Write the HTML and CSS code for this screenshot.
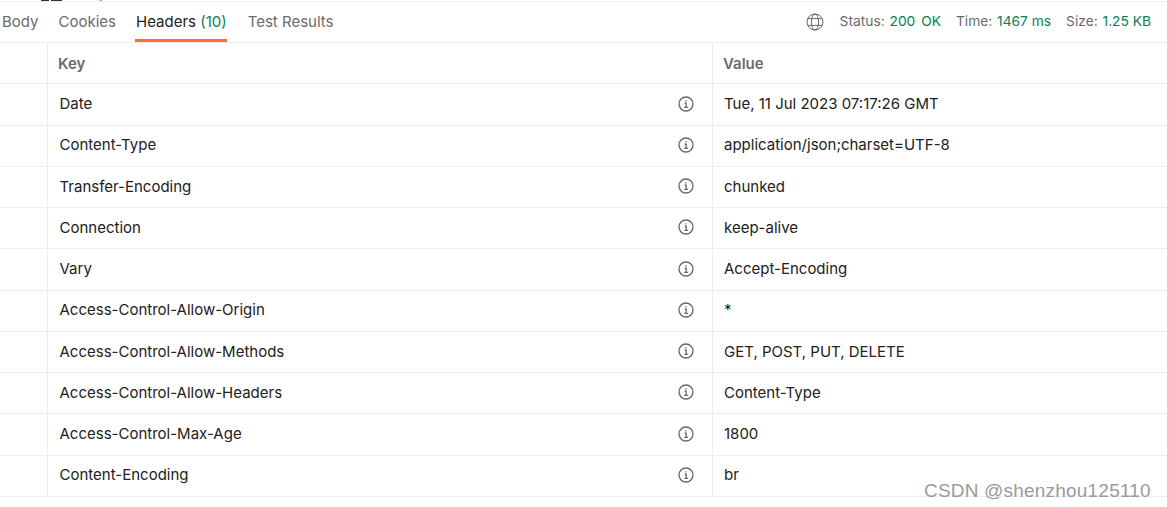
FILE: index.html
```html
<!DOCTYPE html>
<html lang="en">
<head>
<meta charset="utf-8">
<title>Response headers</title>
<link rel="stylesheet" href="styles.css">
</head>
<body>
<div class="topstrip"><i class="bit bit-a"></i><i class="bit bit-b"></i><i class="bit bit-c"></i></div>
<nav class="tabs">
  <div class="tablist">
    <span class="tab tab-body">Body</span>
    <span class="tab">Cookies</span>
    <span class="tab active">Headers <span class="count">(10)</span></span>
    <span class="tab">Test Results</span>
  </div>
  <div class="stats">
    <svg class="globe" viewBox="0 0 18 18" width="18" height="18" fill="none" stroke="#6b6b6b" stroke-width="1"><circle cx="9" cy="9" r="8"/><ellipse cx="9" cy="9" rx="3.6" ry="8"/><path d="M2 5.6h14M2 12.4h14"/></svg>
    <span class="stat">Status: <b class="status-value">200 OK</b></span>
    <span class="stat">Time: <b>1467 ms</b></span>
    <span class="stat">Size: <b>1.25 KB</b></span>
  </div>
</nav>
<div class="table">
  <div class="row head"><div class="gutter"></div><div class="key">Key</div><div class="val">Value</div></div>
  <div class="row"><div class="gutter"></div><div class="key"><span>Date</span><svg class="info" viewBox="0 0 16 16" width="16" height="16"><circle cx="8" cy="8" r="7"/><path d="M6.5 7.2h1.7v4M6.3 11.3h3.6M8 4.2v1.4"/></svg></div><div class="val">Tue, 11 Jul 2023 07:17:26 GMT</div></div>
  <div class="row"><div class="gutter"></div><div class="key"><span>Content-Type</span><svg class="info" viewBox="0 0 16 16" width="16" height="16"><circle cx="8" cy="8" r="7"/><path d="M6.5 7.2h1.7v4M6.3 11.3h3.6M8 4.2v1.4"/></svg></div><div class="val">application/json;charset=UTF-8</div></div>
  <div class="row"><div class="gutter"></div><div class="key"><span>Transfer-Encoding</span><svg class="info" viewBox="0 0 16 16" width="16" height="16"><circle cx="8" cy="8" r="7"/><path d="M6.5 7.2h1.7v4M6.3 11.3h3.6M8 4.2v1.4"/></svg></div><div class="val">chunked</div></div>
  <div class="row"><div class="gutter"></div><div class="key"><span>Connection</span><svg class="info" viewBox="0 0 16 16" width="16" height="16"><circle cx="8" cy="8" r="7"/><path d="M6.5 7.2h1.7v4M6.3 11.3h3.6M8 4.2v1.4"/></svg></div><div class="val">keep-alive</div></div>
  <div class="row"><div class="gutter"></div><div class="key"><span>Vary</span><svg class="info" viewBox="0 0 16 16" width="16" height="16"><circle cx="8" cy="8" r="7"/><path d="M6.5 7.2h1.7v4M6.3 11.3h3.6M8 4.2v1.4"/></svg></div><div class="val">Accept-Encoding</div></div>
  <div class="row"><div class="gutter"></div><div class="key"><span>Access-Control-Allow-Origin</span><svg class="info" viewBox="0 0 16 16" width="16" height="16"><circle cx="8" cy="8" r="7"/><path d="M6.5 7.2h1.7v4M6.3 11.3h3.6M8 4.2v1.4"/></svg></div><div class="val">*</div></div>
  <div class="row"><div class="gutter"></div><div class="key"><span>Access-Control-Allow-Methods</span><svg class="info" viewBox="0 0 16 16" width="16" height="16"><circle cx="8" cy="8" r="7"/><path d="M6.5 7.2h1.7v4M6.3 11.3h3.6M8 4.2v1.4"/></svg></div><div class="val">GET, POST, PUT, DELETE</div></div>
  <div class="row"><div class="gutter"></div><div class="key"><span>Access-Control-Allow-Headers</span><svg class="info" viewBox="0 0 16 16" width="16" height="16"><circle cx="8" cy="8" r="7"/><path d="M6.5 7.2h1.7v4M6.3 11.3h3.6M8 4.2v1.4"/></svg></div><div class="val">Content-Type</div></div>
  <div class="row"><div class="gutter"></div><div class="key"><span>Access-Control-Max-Age</span><svg class="info" viewBox="0 0 16 16" width="16" height="16"><circle cx="8" cy="8" r="7"/><path d="M6.5 7.2h1.7v4M6.3 11.3h3.6M8 4.2v1.4"/></svg></div><div class="val">1800</div></div>
  <div class="row"><div class="gutter"></div><div class="key"><span>Content-Encoding</span><svg class="info" viewBox="0 0 16 16" width="16" height="16"><circle cx="8" cy="8" r="7"/><path d="M6.5 7.2h1.7v4M6.3 11.3h3.6M8 4.2v1.4"/></svg></div><div class="val">br</div></div>
</div>
<div class="watermark">CSDN @shenzhou125110</div>
</body>
</html>
```
FILE: styles.css
```css
* { box-sizing: border-box; }
html, body { margin: 0; padding: 0; background: #fff; overflow: hidden; }
body { width: 1167px; height: 507px; position: relative; font-family: Inter, "Liberation Sans", sans-serif; font-size: 15px; color: #212121; }
.topstrip { height: 2px; border-bottom: 1px solid #ededed; display: flex; align-items: flex-start; }
.bit { display: block; height: 1px; }
.bit-a { width: 8px; margin-left: 41px; background: #333; }
.bit-b { width: 11px; margin-left: 2px; background: #333; }
.bit-c { width: 2px; margin-left: 38px; background: #e8833a; }
.tabs { height: 41px; border-bottom: 1px solid #ededed; display: flex; justify-content: space-between; align-items: stretch; }
.tablist { display: flex; gap: 20px; padding-left: 2px; }
.tab { color: #6b6b6b; display: flex; align-items: center; border-bottom: 3px solid transparent; padding-top: 2px; white-space: pre; }
.tab.active { color: #212121; border-bottom-color: #ff6c37; margin: 0 1px 0 -1px; padding: 2px 0 0 1px; }
.count { color: #0c8054; }
.stats { display: flex; align-items: center; gap: 15px; padding-right: 16px; font-size: 13.78px; color: #6b6b6b; }
.globe { margin-right: 1px; }
.stat { margin-bottom: 2px; }
.stat b { font-weight: 400; color: #0c8054; margin-left: 1px; }
.stat .status-value { word-spacing: 2px; }
.row { display: grid; grid-template-columns: 48px 665px 1fr; height: 41.25px; border-bottom: 1px solid #ededed; align-items: stretch; }
.row > div { display: flex; align-items: center; padding-bottom: 1.5px; }
.gutter { border-right: 1px solid #ededed; }
.key { padding: 0 18.4px 0 11.5px; justify-content: space-between; border-right: 1px solid #ededed; }
.val { padding-left: 11px; }
.row.head > div { font-weight: 600; color: #6b6b6b; padding-bottom: 0; }
.row.head > .key { padding-left: 10px; }
.row.head > .val { padding-left: 10px; }
.info { fill: none; stroke: #666; stroke-width: 1.3; }
.watermark { position: absolute; left: 924px; top: 480px; font-family: "Liberation Sans", sans-serif; font-size: 19px; color: #9a9a9a; letter-spacing: 0.2px; }
```
